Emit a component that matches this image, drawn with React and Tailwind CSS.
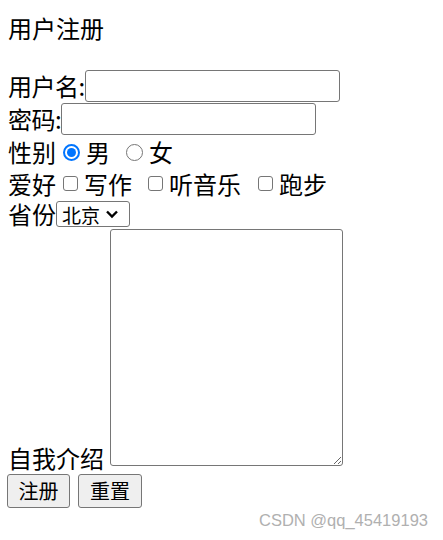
import React from "react";

const font = { fontFamily: '"Noto Sans CJK SC", "Noto Sans", sans-serif' };

function Chevron() {
  return (
    <svg width="14" height="10" viewBox="0 0 14 10" className="ml-[5px]">
      <path d="M2 2.5 L7 7.5 L12 2.5" fill="none" stroke="#000" strokeWidth="2.4" />
    </svg>
  );
}

function Radio({ checked, className }) {
  return checked ? (
    <span className={`w-[17px] h-[17px] rounded-full border-2 border-[#0075ff] flex items-center justify-center shrink-0 ${className}`}>
      <span className="w-[9px] h-[9px] rounded-full bg-[#0075ff]" />
    </span>
  ) : (
    <span className={`w-[17px] h-[17px] rounded-full border border-[#767676] bg-white shrink-0 ${className}`} />
  );
}

function Check({ className }) {
  return <span className={`w-[15px] h-[15px] rounded-[3px] border border-[#767676] bg-white shrink-0 ${className}`} />;
}

export default function App() {
  return (
    <div className="relative w-[443px] h-[540px] bg-white text-black text-[24px] leading-none pl-2" style={font}>
      <div className="pt-[15px] h-[41px] flex items-center">用户注册</div>

      <form className="mt-[28px]">
        <div className="flex items-center h-[33px]">
          <span className="tracking-[-0.5px]">用户名:</span>
          <input type="text" className="w-[255px] h-[32px] border border-[#767676] rounded-[3px] bg-white px-1 text-[16px]" />
        </div>
        <div className="flex items-center h-[34px]">
          <span className="tracking-[-0.5px]">密码:</span>
          <input type="password" className="w-[255px] h-[32px] border border-[#767676] rounded-[3px] bg-white px-1 text-[16px]" />
        </div>
        <div className="flex items-center h-[32px]">
          <span>性别</span>
          <Radio checked className="ml-[7px]" />
          <span className="ml-[6px]">男</span>
          <Radio className="ml-[16px]" />
          <span className="ml-[6px]">女</span>
        </div>
        <div className="flex items-center h-[31px]">
          <span>爱好</span>
          <Check className="ml-[7px]" />
          <span className="ml-[6px]">写作</span>
          <Check className="ml-[16px]" />
          <span className="ml-[6px]">听音乐</span>
          <Check className="ml-[17px]" />
          <span className="ml-[6px]">跑步</span>
        </div>
        <div className="flex items-center h-[30px]">
          <span>省份</span>
          <div className="w-[74px] h-[26px] border border-[#767676] rounded-[3px] flex items-center pl-[5px] text-[19px]">
            <span>北京</span>
            <Chevron />
          </div>
        </div>
        <div className="flex items-end">
          <span className="mb-[-4px]">自我介绍</span>
          <textarea className="ml-[6px] w-[233px] h-[237px] border border-[#767676] rounded-[3px] bg-white text-[16px]" />
        </div>
        <div className="flex items-center mt-[8px] ml-[-1px] gap-[8px]">
          <button type="button" className="w-[63px] h-[34px] bg-[#efefef] border border-[#767676] rounded-[3px] text-[20px]">
            注册
          </button>
          <button type="reset" className="w-[64px] h-[34px] bg-[#efefef] border border-[#767676] rounded-[3px] text-[20px]">
            重置
          </button>
        </div>
      </form>

      <div
        className="absolute right-[15px] top-[512px] text-[16.5px] text-[#b0b0b0]"
        style={{ fontFamily: '"Liberation Sans", Arial, sans-serif' }}
      >
        CSDN @qq_45419193
      </div>
    </div>
  );
}
